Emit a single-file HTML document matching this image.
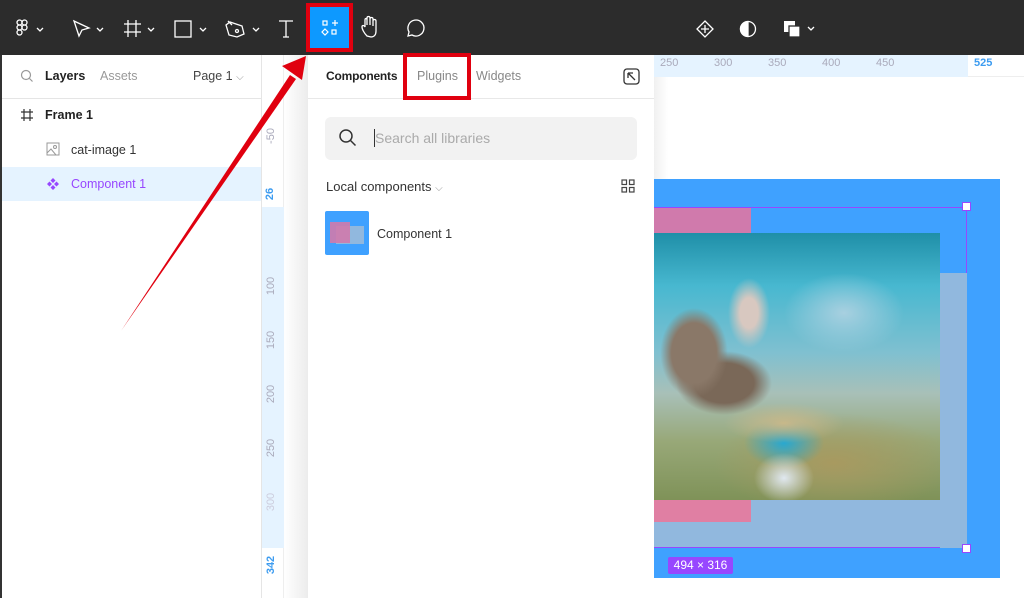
<!DOCTYPE html>
<html><head><meta charset="utf-8"><style>
*{box-sizing:border-box;margin:0;padding:0}
body{width:1024px;height:598px;position:relative;overflow:hidden;background:#fff;font-family:"Liberation Sans",sans-serif}
.a{position:absolute}
.top{left:0;top:0;width:1024px;height:55px;background:#2c2c2c}
.t{font-size:12.5px}
</style></head><body>
<div class="a top"></div>
<svg class="a" style="left:0;top:0" width="1024" height="55" fill="none" stroke="#fff" stroke-width="1.3">
<g transform="translate(17,20)"><rect x="0" y="0" width="5" height="5" rx="2.5"/><rect x="5" y="0" width="5" height="5" rx="2.5"/><rect x="0" y="5" width="5" height="5" rx="2.5"/><circle cx="7.5" cy="7.5" r="2.5"/><rect x="0" y="10" width="5" height="5" rx="2.5"/></g>
<path d="M37 28l3 3 3-3M97 28l3 3 3-3M148 28l3 3 3-3M200 28l3 3 3-3M253 28l3 3 3-3M808 27l3 3 3-3"/>
<path d="M74 21l15 7-7 2-3 6z"/>
<path d="M128 20v17M136 20v17M124 24h17M124 32h17"/>
<rect x="175" y="21" width="16" height="16"/>
<path d="M230 22l12 4 2 8-7 3-8-2-3-10z M228 21l4 4"/><circle cx="237" cy="31" r="1.5"/>
<path d="M279 21h14M286 21v16M283 37h6"/>
<path d="M367 36c-3-3-5-7-5-9s2-2 3 0v-7c0-2 2-2 2 0v5-7c0-2 3-2 3 0v7-6c0-2 3-2 3 0v7-5c0-2 3-2 3 0v10c0 4-2 6-5 6z"/>
<path d="M408 36l1-4a8 8 0 1 1 3 3z"/>
<path d="M705 21l8 8-8 8-8-8zM705 25v8M701 29h8"/>
<circle cx="748" cy="29" r="7.5"/><path d="M748 21.5a7.5 7.5 0 0 0 0 15z" fill="#fff"/>
<rect x="784" y="21" width="11" height="11" fill="#fff" stroke="none"/><rect x="789" y="26" width="11" height="11" fill="#fff" stroke="#2c2c2c"/>
</svg>
<div class="a" style="left:306px;top:3px;width:47px;height:49px;border:4px solid #e0000f"></div>
<div class="a" style="left:310px;top:7px;width:39px;height:41px;background:#0d99ff"></div>
<svg class="a" style="left:310px;top:7px" width="39" height="41" fill="none" stroke="#fff" stroke-width="1.2"><rect x="13" y="14" width="4" height="4"/><path d="M22 16h6M25 13v6M15 22l3 3-3 3-3-3z"/><rect x="22" y="23" width="4" height="4"/></svg>

<div class="a" style="left:0;top:55px;width:2px;height:543px;background:#333"></div>
<div class="a" style="left:261px;top:55px;width:1px;height:543px;background:#e5e5e5"></div>
<div class="a" style="left:2px;top:98px;width:259px;height:1px;background:#e5e5e5"></div>
<svg class="a" style="left:20px;top:69px" width="14" height="14" fill="none" stroke="#999" stroke-width="1.2"><circle cx="6" cy="6" r="4.5"/><path d="M9.5 9.5l3 3"/></svg>
<div class="a t" style="left:45px;top:69px;font-weight:bold;color:#222">Layers</div>
<div class="a t" style="left:100px;top:69px;color:#999">Assets</div>
<div class="a t" style="left:193px;top:69px;color:#444">Page 1 <span style="color:#999;font-size:10px">⌵</span></div>
<svg class="a" style="left:20px;top:108px" width="14" height="14" stroke="#333" stroke-width="1.2"><path d="M4 1v12M10 1v12M1 4h12M1 10h12"/></svg>
<div class="a t" style="left:45px;top:108px;font-weight:bold;color:#222">Frame 1</div>
<svg class="a" style="left:46px;top:142px" width="14" height="14" fill="none" stroke="#999" stroke-width="1"><rect x="1" y="1" width="12" height="12"/><circle cx="9" cy="5" r="1.5"/><path d="M1 11l4-4 5 6"/></svg>
<div class="a t" style="left:71px;top:143px;color:#333">cat-image 1</div>
<div class="a" style="left:2px;top:167px;width:259px;height:34px;background:#e5f3ff"></div>
<svg class="a" style="left:46px;top:177px" width="14" height="14" fill="#9747ff"><path d="M7 1l2.5 2.5L7 6 4.5 3.5zM7 8l2.5 2.5L7 13l-2.5-2.5zM3.5 4.5L6 7 3.5 9.5 1 7zM10.5 4.5L13 7l-2.5 2.5L8 7z"/></svg>
<div class="a t" style="left:71px;top:177px;color:#9747ff">Component 1</div>

<div class="a" style="left:262px;top:55px;width:22px;height:543px;background:#fff;border-right:1px solid #eee"></div>
<div class="a" style="left:262px;top:207px;width:22px;height:341px;background:#e5f3ff"></div>
<div class="a" style="left:654px;top:55px;width:370px;height:22px;background:#fff;border-bottom:1px solid #eee"></div>
<div class="a" style="left:654px;top:55px;width:314px;height:22px;background:#e5f3ff"></div>
<div class="a" style="left:660px;top:57px;font-size:11px;color:#aab">250</div>
<div class="a" style="left:714px;top:57px;font-size:11px;color:#aab">300</div>
<div class="a" style="left:768px;top:57px;font-size:11px;color:#aab">350</div>
<div class="a" style="left:822px;top:57px;font-size:11px;color:#aab">400</div>
<div class="a" style="left:876px;top:57px;font-size:11px;color:#aab">450</div>
<div class="a" style="left:974px;top:57px;font-size:11px;color:#3d9cf0;font-weight:bold">525</div>
<div class="a" style="left:263px;top:130px;font-size:11px;color:#aab;transform:rotate(-90deg)">-50</div>
<div class="a" style="left:264px;top:188px;font-size:11px;color:#3d9cf0;font-weight:bold;transform:rotate(-90deg)">26</div>
<div class="a" style="left:262px;top:280px;font-size:11px;color:#aab;transform:rotate(-90deg)">100</div>
<div class="a" style="left:262px;top:334px;font-size:11px;color:#aab;transform:rotate(-90deg)">150</div>
<div class="a" style="left:262px;top:388px;font-size:11px;color:#aab;transform:rotate(-90deg)">200</div>
<div class="a" style="left:262px;top:442px;font-size:11px;color:#aab;transform:rotate(-90deg)">250</div>
<div class="a" style="left:262px;top:496px;font-size:11px;color:#ccd;transform:rotate(-90deg)">300</div>
<div class="a" style="left:262px;top:559px;font-size:11px;color:#3d9cf0;font-weight:bold;transform:rotate(-90deg)">342</div>

<div class="a" style="left:654px;top:179px;width:346px;height:399px;background:#3fa1ff"></div>
<div class="a" style="left:654px;top:207px;width:313px;height:341px;border:1px solid #9747ff"></div>
<div class="a" style="left:654px;top:208px;width:97px;height:25px;background:#d07aac"></div>
<div class="a" style="left:940px;top:273px;width:27px;height:275px;background:#91b8de"></div>
<div class="a" style="left:654px;top:500px;width:313px;height:47px;background:#91b8de"></div>
<div class="a" style="left:654px;top:500px;width:97px;height:22px;background:#e07fa3"></div>
<div class="a" style="left:654px;top:233px;width:286px;height:267px;background:
radial-gradient(ellipse 45px 60px at 40px 120px,#8a7868 50%,transparent 75%),
radial-gradient(ellipse 30px 50px at 95px 80px,#d8c8c0 30%,transparent 70%),
radial-gradient(ellipse 60px 40px at 70px 150px,#7a6858 50%,transparent 80%),
radial-gradient(ellipse 30px 25px at 130px 245px,#e0e8f0,transparent),
radial-gradient(ellipse 60px 20px at 130px 190px,#c8b88a,transparent),
radial-gradient(ellipse 40px 25px at 130px 210px,#28a8d0,transparent),
radial-gradient(ellipse 120px 50px at 180px 230px,#a89a60,transparent),
radial-gradient(ellipse 60px 40px at 190px 80px,#a8d0e0,transparent),
linear-gradient(180deg,#1f8fa8 0%,#48b8d0 20%,#80c0d0 45%,#a8c0b8 60%,#98a878 78%,#7f9258 100%)"></div>
<div class="a" style="left:962px;top:202px;width:9px;height:9px;background:#fff;border:1px solid #9747ff"></div>
<div class="a" style="left:962px;top:544px;width:9px;height:9px;background:#fff;border:1px solid #9747ff"></div>
<div class="a" style="left:668px;top:557px;width:65px;height:17px;background:#9747ff;border-radius:2px;color:#fff;font-size:12px;line-height:17px;text-align:center">494 × 316</div>

<div class="a" style="left:284px;top:55px;width:24px;height:543px;background:linear-gradient(90deg,#fff,#ececec)"></div>
<div class="a" style="left:654px;top:77px;width:14px;height:102px;background:linear-gradient(90deg,#f0f0f0,rgba(255,255,255,0))"></div>
<div class="a" style="left:308px;top:55px;width:346px;height:543px;background:#fff"></div>
<div class="a" style="left:308px;top:98px;width:346px;height:1px;background:#e8e8e8"></div>
<div class="a" style="left:326px;top:69px;font-size:12px;font-weight:bold;color:#222;letter-spacing:-0.2px">Components</div>
<div class="a t" style="left:417px;top:69px;color:#888">Plugins</div>
<div class="a t" style="left:476px;top:69px;color:#888">Widgets</div>
<div class="a" style="left:403px;top:53px;width:68px;height:47px;border:4px solid #e0000f"></div>
<svg class="a" style="left:623px;top:68px" width="18" height="18" fill="none" stroke="#333" stroke-width="1.3"><rect x="1" y="1" width="15" height="15" rx="3"/><path d="M5 5l7 7M5 5v5M5 5h5"/></svg>
<div class="a" style="left:325px;top:117px;width:312px;height:43px;background:#f2f2f2;border-radius:6px"></div>
<svg class="a" style="left:338px;top:128px" width="20" height="20" fill="none" stroke="#333" stroke-width="1.5"><circle cx="8" cy="8" r="6"/><path d="M12.5 12.5l5 5"/></svg>
<div class="a" style="left:374px;top:129px;width:1px;height:18px;background:#333"></div>
<div class="a" style="left:375px;top:130px;font-size:14px;color:#aaa">Search all libraries</div>
<div class="a t" style="left:326px;top:179px;color:#333;font-size:13px">Local components <span style="color:#999;font-size:10px">⌵</span></div>
<svg class="a" style="left:621px;top:179px" width="14" height="14" fill="none" stroke="#444" stroke-width="1.2"><rect x="1" y="1" width="4.5" height="4.5"/><rect x="8.5" y="1" width="4.5" height="4.5"/><rect x="1" y="8.5" width="4.5" height="4.5"/><rect x="8.5" y="8.5" width="4.5" height="4.5"/></svg>
<div class="a" style="left:325px;top:211px;width:44px;height:44px;background:#3fa1ff;border-radius:2px"></div>
<div class="a" style="left:336px;top:226px;width:28px;height:18px;background:#91b8de"></div>
<div class="a" style="left:330px;top:222px;width:20px;height:21px;background:#d07aac;opacity:.9"></div>
<div class="a t" style="left:377px;top:227px;color:#333">Component 1</div>

<svg class="a" style="left:0;top:0" width="1024" height="598"><path d="M121 331L290 75l6 4z" fill="#e0000f"/><path d="M306 56l-24 10 20 14z" fill="#e0000f"/></svg>
</body></html>
